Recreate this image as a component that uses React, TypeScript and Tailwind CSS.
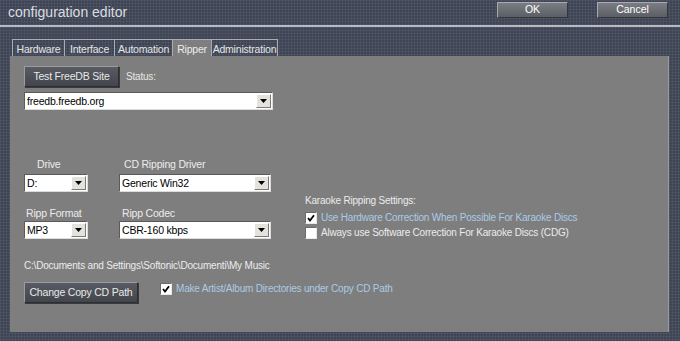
import React from "react";

function Select({ value, w }: { value: string; w: string }) {
  return (
    <div
      className={`${w} h-[18px] flex items-center bg-white border border-t-[#5a5a5a] border-l-[#5a5a5a] border-r-[#dcdcdc] border-b-[#dcdcdc]`}
    >
      <div className="flex-1 pl-[2px] text-[10.5px] text-black leading-none">{value}</div>
      <div className="w-[15px] h-[14px] mr-[1px] flex items-center justify-center bg-[#e4e2dc] border border-t-white border-l-white border-r-[#7a7a7a] border-b-[#7a7a7a]">
        <svg width="7" height="4" viewBox="0 0 7 4">
          <polygon points="0,0 7,0 3.5,4" fill="#000" />
        </svg>
      </div>
    </div>
  );
}

function Check({ checked }: { checked: boolean }) {
  return (
    <div className="w-[12px] h-[12px] bg-white border border-t-[#6a6a6a] border-l-[#6a6a6a] border-r-[#e8e8e8] border-b-[#e8e8e8] flex items-center justify-center">
      {checked && (
        <svg width="8" height="8" viewBox="0 0 8 8">
          <path d="M1 4 L3 6.5 L7 1.2" stroke="#000" strokeWidth="1.8" fill="none" />
        </svg>
      )}
    </div>
  );
}

function DarkButton({ label, w }: { label: string; w: string }) {
  return (
    <div
      className={`${w} h-[21px] flex items-center justify-center text-[10.5px] text-[#e8e8e8] bg-[linear-gradient(#585b62,#42454b)] border border-t-[#9a9ca2] border-l-[#9a9ca2] border-r-[#2c2e33] border-b-[#2c2e33] shadow-[1px_1px_0_#3a3a3a]`}
    >
      {label}
    </div>
  );
}

function TopButton({ label }: { label: string }) {
  return (
    <div className="w-[71px] h-[16px] flex items-center justify-center text-[10.5px] text-white bg-[linear-gradient(#7a7d84,#5b5e65)] border border-t-[#a8aab0] border-l-[#a8aab0] border-r-[#34363b] border-b-[#34363b]">
      {label}
    </div>
  );
}

export default function App() {
  const tabs = ["Hardware", "Interface", "Automation", "Ripper", "Administration"];
  const widths = ["w-[52px]", "w-[50px]", "w-[58px]", "w-[39px]", "w-[67px]"];
  return (
    <div
      className="w-[680px] h-[341px] overflow-hidden flex flex-col bg-[#3e4554] bg-[linear-gradient(rgba(255,255,255,0.05)_1px,transparent_1px),linear-gradient(90deg,rgba(255,255,255,0.05)_1px,transparent_1px)] bg-[size:3px_3px]"
      style={{ fontFamily: '"Liberation Sans", Arial, sans-serif' }}
    >
      {/* Title bar */}
      <div className="h-[25px] flex items-start justify-between">
        <div className="pl-[8px] pt-[3px] text-[14px] text-[#dcdde0] leading-[18px]">configuration editor</div>
        <div className="flex gap-[29px] pt-[2px] pr-[12px]">
          <TopButton label="OK" />
          <TopButton label="Cancel" />
        </div>
      </div>
      <div className="h-[2px] bg-[#b6bac2]" />

      {/* Tabs */}
      <div className="mt-[12px] ml-[12px] flex h-[17px]">
        {tabs.map((t, i) => (
          <div
            key={t}
            className={`${widths[i]} h-[17px] flex items-end justify-center pb-[2px] text-[10.5px] tracking-[-0.2px] leading-none border-t border-l border-[#a9acb3] ${
              t === "Ripper" ? "bg-[#7e7e7e] text-[#ececec]" : "text-[#e6e6e6]"
            } ${i === tabs.length - 1 ? "border-r" : ""}`}
          >
            {t}
          </div>
        ))}
      </div>

      {/* Panel */}
      <div className="ml-[10px] w-[659px] h-[276px] bg-[#7e7e7e] border-r border-[#9a9a9a] flex flex-col pl-[14px] text-[10px] tracking-[-0.2px] leading-none">
        <div className="mt-[10px] flex items-center gap-[7px]">
          <DarkButton label="Test FreeDB Site" w="w-[95px]" />
          <span className="text-[#e6e6e6]">Status:</span>
        </div>
        <div className="mt-[5px]">
          <Select value="freedb.freedb.org" w="w-[249px]" />
        </div>

        <div className="mt-[49px] flex items-start">
          <div className="flex flex-col w-[95px]">
            <div className="pl-[13px] h-[15px] text-[#ececec] text-[10.5px]">Drive</div>
            <Select value="D:" w="w-[64px]" />
            <div className="mt-[16px] pl-[2px] h-[13px] text-[#ececec] text-[10.5px]">Ripp Format</div>
            <Select value="MP3" w="w-[64px]" />
          </div>
          <div className="flex flex-col w-[186px]">
            <div className="pl-[5px] h-[15px] text-[#ececec] text-[10.5px]">CD Ripping Driver</div>
            <Select value="Generic Win32" w="w-[152px]" />
            <div className="mt-[16px] pl-[3px] h-[13px] text-[#ececec] text-[10.5px]">Ripp Codec</div>
            <Select value="CBR-160 kbps" w="w-[152px]" />
          </div>
          <div className="flex flex-col pt-[37px]">
            <div className="text-[#ececec] h-[14px]">Karaoke Ripping Settings:</div>
            <div className="flex items-center gap-[4px] h-[15px]">
              <Check checked />
              <span className="text-[#aacbe6]">Use Hardware Correction When Possible For Karaoke Discs</span>
            </div>
            <div className="flex items-center gap-[4px] h-[15px]">
              <Check checked={false} />
              <span className="text-[#ececec]">Always use Software Correction For Karaoke Discs (CDG)</span>
            </div>
          </div>
        </div>

        <div className="mt-[21px] text-[#ececec] h-[13px]">C:\Documents and Settings\Softonic\Documenti\My Music</div>
        <div className="mt-[8px] flex items-start">
          <DarkButton label="Change Copy CD Path" w="w-[114px]" />
          <div className="ml-[22px] mt-[1px] flex items-center gap-[4px]">
            <Check checked />
            <span className="text-[#aacbe6]">Make Artist/Album Directories under Copy CD Path</span>
          </div>
        </div>
      </div>
    </div>
  );
}
